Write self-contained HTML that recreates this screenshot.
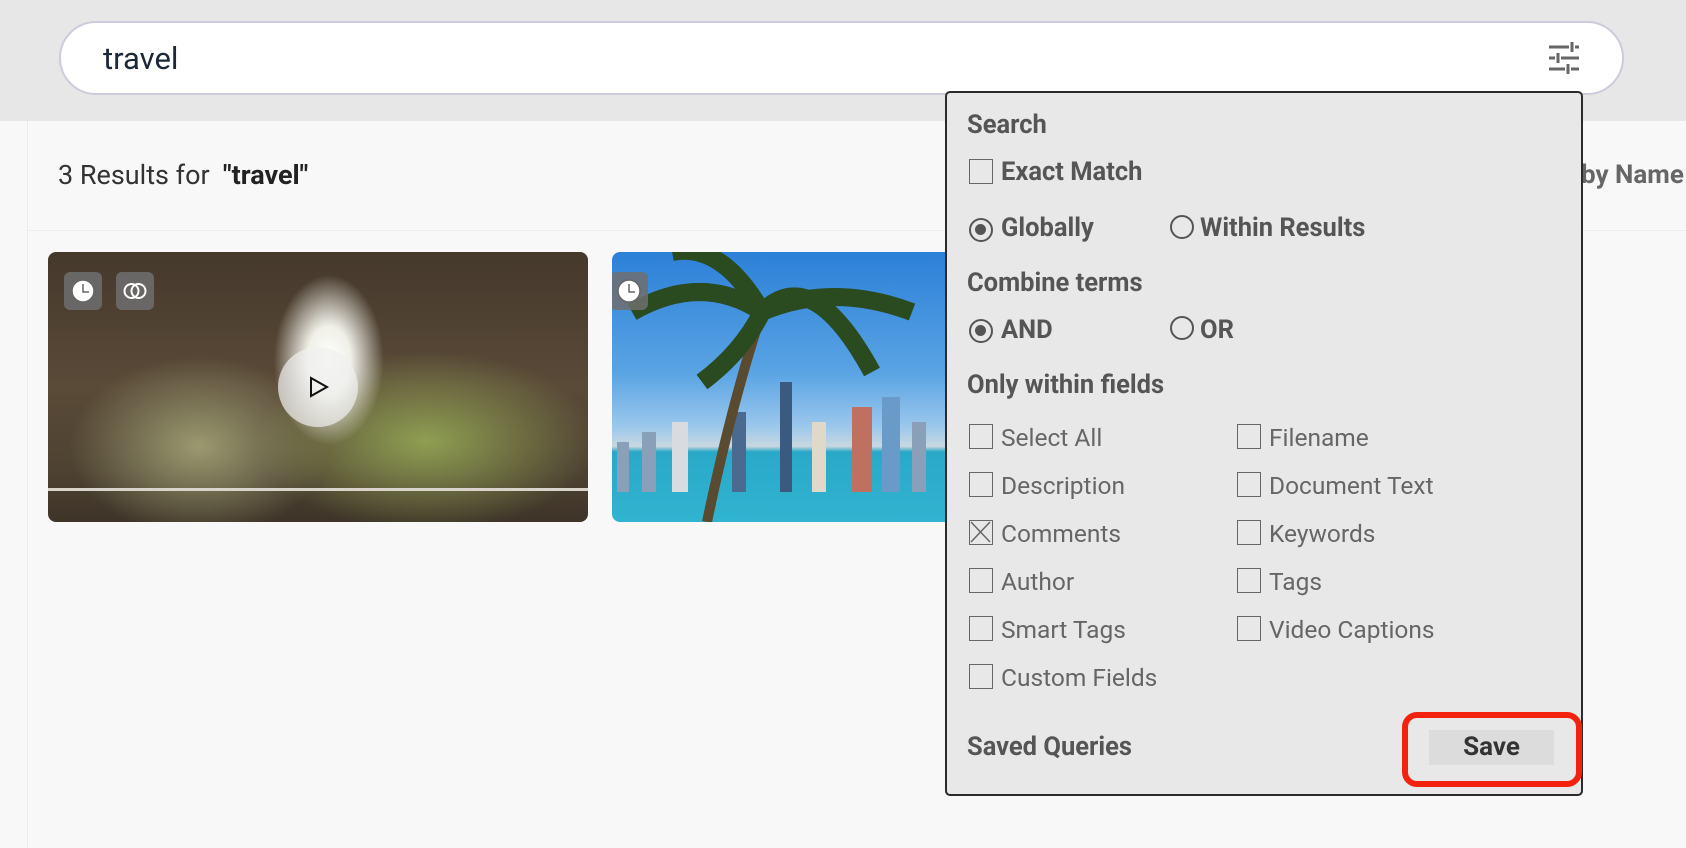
<!DOCTYPE html>
<html><head><meta charset="utf-8"><style>
*{margin:0;padding:0;box-sizing:border-box}
body{width:1686px;height:848px;overflow:hidden;background:#f8f8f8;font-family:"Roboto","Liberation Sans",sans-serif;position:relative}
.top{position:absolute;left:0;top:0;width:1686px;height:121px;background:#e7e7e7}
.search{position:absolute;left:59px;top:21px;width:1565px;height:74px;background:#fff;border:2px solid #cdcbdc;border-radius:37px}
.search span{position:absolute;left:42px;top:17px;font-size:31px;color:#1c2838}
.vl{position:absolute;left:27px;top:121px;width:1px;height:727px;background:#ececec}
.hl{position:absolute;left:27px;top:230px;width:1659px;height:1px;background:#eeeeee}
.res{position:absolute;left:58px;top:159px;font-size:27px;color:#333}
.res b{color:#222}
.byname{position:absolute;left:1581px;top:160px;font-size:26px;font-weight:bold;color:#666}
.t1{position:absolute;left:48px;top:252px;width:540px;height:270px;border-radius:8px;overflow:hidden;
background:radial-gradient(ellipse 55px 85px at 52% 40%,#ffffff 0%,#f0f0e8 40%,rgba(200,200,180,0) 100%),
radial-gradient(ellipse 170px 90px at 70% 70%,#8f9f52 0%,rgba(120,130,70,0) 100%),
radial-gradient(ellipse 130px 90px at 28% 72%,#9a9a70 0%,rgba(120,120,80,0) 100%),
linear-gradient(#45392c,#5a4a38 50%,#4e4232 80%,#3e3428)}
.t1 .bar{position:absolute;left:0;top:236px;width:100%;height:3px;background:#d8d4cc}
.t2{position:absolute;left:612px;top:252px;width:333px;height:270px;overflow:hidden;border-radius:8px 0 0 8px;
background:linear-gradient(#2c80d8 0%,#5aa4e4 45%,#9cc8ec 65%,#c8d8e0 72%,#2aa8c8 74%,#30b4d0 100%)}
.ic{position:absolute;top:20px;width:38px;height:38px;background:rgba(110,110,110,.85);border-radius:6px}
.ic svg{position:absolute;left:7px;top:7px}
.play{position:absolute;left:230px;top:95px;width:80px;height:80px;border-radius:50%;background:rgba(240,240,240,.7)}
.panel{position:absolute;left:945px;top:91px;width:638px;height:705px;background:#e8e8e8;border:2px solid #2b2b2b;border-radius:5px;color:#555}
.panel .h{position:absolute;left:20px;font-size:25.5px;font-weight:bold}
.panel .o{position:absolute;font-size:24.5px;color:#666}
.panel .ob{position:absolute;font-size:25.5px;font-weight:bold;color:#555}
.cb{position:absolute;width:24px;height:25px;border:1.5px solid #666;background:transparent}
.rd{position:absolute;width:24px;height:24px;border:2.5px solid #555;border-radius:50%}
.rd.on::after{content:"";position:absolute;left:4px;top:4px;width:11px;height:11px;border-radius:50%;background:#555}
.save{position:absolute;left:482px;top:637px;width:125px;height:35px;background:#dcdcdc;font-size:26px;font-weight:bold;color:#333;text-align:center;line-height:35px}
.ring{position:absolute;left:455px;top:619px;width:180px;height:75px;border:6px solid #f3220f;border-radius:15px}
</style></head><body>
<div class="top"></div>
<div class="search"><span>travel</span>
<svg style="position:absolute;left:1486px;top:18px" width="34" height="34" viewBox="0 0 34 34" fill="none" stroke="#666" stroke-width="3"><path d="M2 6h20M28 6h4M25 1v10M2 17h6M14 17h18M11 12v10M2 28h16M24 28h8M21 23v10"/></svg></div>
<div class="vl"></div><div class="hl"></div>
<div class="res">3 Results for &nbsp;<b>"travel"</b></div>
<div class="byname">by Name</div>
<div class="t1"><div class="bar"></div><div class="play"><svg style="position:absolute;left:30px;top:28px" width="22" height="24" viewBox="0 0 22 24"><path d="M3 3L19 12L3 21Z" fill="none" stroke="#111" stroke-width="2"/></svg></div>
<div class="ic" style="left:16px"><svg width="24" height="24" viewBox="0 0 24 24" fill="#fff" stroke="#666" stroke-width="1.5"><circle cx="12" cy="12" r="11"/><path d="M12 5v8h6" fill="none"/></svg></div>
<div class="ic" style="left:68px"><svg width="24" height="24" viewBox="0 0 24 24" fill="none" stroke="#fff" stroke-width="2"><circle cx="8.5" cy="12" r="7"/><circle cx="15.5" cy="12" r="7"/></svg></div></div>
<div class="t2">
<svg width="333" height="270" style="position:absolute;left:0;top:0"><g fill="#8aa0b8"><rect x="5" y="190" width="12" height="50"/><rect x="30" y="180" width="14" height="60"/><rect x="60" y="170" width="16" height="70" fill="#d8dce0"/><rect x="120" y="160" width="14" height="80" fill="#4a6a90"/><rect x="168" y="130" width="12" height="110" fill="#3a5a80"/><rect x="200" y="170" width="14" height="70" fill="#e0d8c8"/><rect x="240" y="155" width="20" height="85" fill="#c07060"/><rect x="270" y="145" width="18" height="95" fill="#6a9ac8"/><rect x="300" y="170" width="14" height="70"/></g>
<path d="M95 270 Q120 150 150 60" stroke="#5a4a30" stroke-width="10" fill="none"/>
<path d="M150 60 Q90 20 20 60 M150 60 Q200 10 260 120 M150 60 Q110 -10 60 0 M150 60 Q220 30 300 60 M150 60 Q130 100 90 130" stroke="#2a4a20" stroke-width="18" fill="none"/></svg>
<div class="ic" style="left:-2px"><svg width="24" height="24" viewBox="0 0 24 24" fill="#fff" stroke="#666" stroke-width="1.5"><circle cx="12" cy="12" r="11"/><path d="M12 5v8h6" fill="none"/></svg></div></div>
<div class="panel">
<div class="h" style="top:17px">Search</div>
<div class="cb" style="left:22px;top:66px"></div><div class="ob" style="left:54px;top:64px">Exact Match</div>
<div class="rd on" style="left:22px;top:125px"></div><div class="ob" style="left:54px;top:120px">Globally</div>
<div class="rd" style="left:223px;top:122px"></div><div class="ob" style="left:253px;top:120px">Within Results</div>
<div class="h" style="top:175px">Combine terms</div>
<div class="rd on" style="left:22px;top:226px"></div><div class="ob" style="left:54px;top:222px">AND</div>
<div class="rd" style="left:223px;top:223px"></div><div class="ob" style="left:253px;top:222px">OR</div>
<div class="h" style="top:277px">Only within fields</div>
<div class="cb" style="left:22px;top:331px"></div><div class="o" style="left:54px;top:330px">Select All</div>
<div class="cb" style="left:290px;top:331px"></div><div class="o" style="left:322px;top:330px">Filename</div>
<div class="cb" style="left:22px;top:379px"></div><div class="o" style="left:54px;top:378px">Description</div>
<div class="cb" style="left:290px;top:379px"></div><div class="o" style="left:322px;top:378px">Document Text</div>
<div class="cb" style="left:22px;top:427px"><svg width="21" height="22" style="position:absolute;left:0;top:0"><path d="M1 1L20 21M20 1L1 21" stroke="#666" stroke-width="1.5"/></svg></div><div class="o" style="left:54px;top:426px">Comments</div>
<div class="cb" style="left:290px;top:427px"></div><div class="o" style="left:322px;top:426px">Keywords</div>
<div class="cb" style="left:22px;top:475px"></div><div class="o" style="left:54px;top:474px">Author</div>
<div class="cb" style="left:290px;top:475px"></div><div class="o" style="left:322px;top:474px">Tags</div>
<div class="cb" style="left:22px;top:523px"></div><div class="o" style="left:54px;top:522px">Smart Tags</div>
<div class="cb" style="left:290px;top:523px"></div><div class="o" style="left:322px;top:522px">Video Captions</div>
<div class="cb" style="left:22px;top:571px"></div><div class="o" style="left:54px;top:570px">Custom Fields</div>
<div class="h" style="top:639px">Saved Queries</div>
<div class="save">Save</div><div class="ring"></div>
</div>
</body></html>
